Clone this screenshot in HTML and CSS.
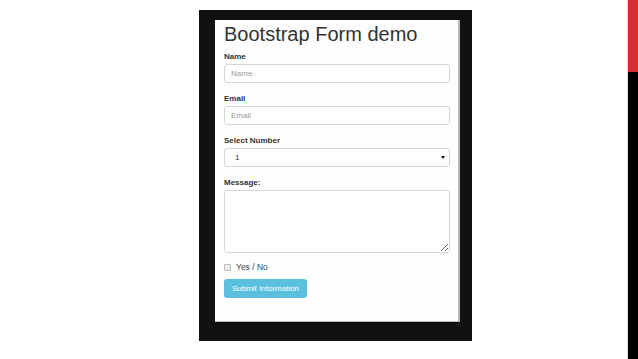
FILE: index.html
```html
<!DOCTYPE html>
<html>

<head>
    <title>Bootstrap Form demo</title>
    <link rel="stylesheet" href="styles.css">
</head>

<body>
    <div class="slide">
        <div class="screen">
            <div class="panel">
                <h1>Bootstrap Form demo</h1>
                <form onsubmit="event.preventDefault();" autocomplete="off">
                    <div class="form-group">
                        <label for="name">Name</label>
                        <input type="text" id="name" placeholder="Name">
                    </div>
                    <div class="form-group">
                        <label for="email">Email</label>
                        <input type="text" id="email" placeholder="Email">
                    </div>
                    <div class="form-group">
                        <label for="number">Select Number</label>
                        <div class="select-wrap">
                            <select id="number">
                                <option>1</option>
                                <option>2</option>
                                <option>3</option>
                            </select>
                        </div>
                    </div>
                    <div class="form-group">
                        <label for="message">Message:</label>
                        <textarea id="message"></textarea>
                    </div>
                    <div class="checkbox">
                        <input type="checkbox" id="yesno">
                        <label for="yesno">Yes / No</label>
                    </div>
                    <input type="submit" class="btn-info" value="Submit Information">
                </form>
            </div>
        </div>
    </div>
    <div class="side-bar">
        <div class="side-red"></div>
        <div class="side-black"></div>
    </div>
</body>

</html>
```

FILE: styles.css
```css
html, body {
    margin: 0;
    height: 100%;
    background-color: #fff;
}

body {
    display: flex;
    font-family: "Liberation Sans", Arial, sans-serif;
    color: #333;
}

.slide {
    flex: 1;
    padding: 10px 0 0 199px;
}

.screen {
    width: 273px;
    height: 331px;
    background-color: #111;
    padding: 10px 0 0 16px;
    box-sizing: border-box;
}

.panel {
    width: 245px;
    height: 302px;
    box-sizing: border-box;
    background-color: #fefefe;
    border-right: 2px solid #b8b8b8;
    border-bottom: 1px solid #b8b8b8;
    padding: 2px 8px 0 9px;
}

h1 {
    margin: 0;
    font-size: 20px;
    line-height: 24px;
    font-weight: normal;
    color: #333;
}

form {
    padding-top: 5px;
}

.form-group {
    margin-bottom: 10px;
}

.form-group label {
    display: block;
    font-size: 8px;
    line-height: 12px;
    font-weight: bold;
    margin-bottom: 1px;
}

input[type=text], select, textarea {
    display: block;
    width: 100%;
    height: 19px;
    box-sizing: border-box;
    border: 1px solid #d6d6d6;
    border-radius: 3px;
    background-color: #fff;
    font-family: "Liberation Sans", Arial, sans-serif;
    font-size: 8px;
    color: #333;
    padding: 0 6px;
    margin: 0;
    outline: none;
}

input::placeholder {
    color: #999;
}

.select-wrap {
    position: relative;
}

select {
    appearance: none;
    padding-left: 10px;
}

.select-wrap::after {
    content: "";
    position: absolute;
    right: 5px;
    top: 8px;
    border-left: 2px solid transparent;
    border-right: 2px solid transparent;
    border-top: 3px solid #111;
}

textarea {
    height: 63px;
    resize: vertical;
    padding: 4px 6px;
}

.checkbox {
    display: flex;
    align-items: center;
    gap: 5px;
    height: 12px;
    margin-top: -2px;
    font-size: 8.5px;
    color: #444;
}

.checkbox input {
    appearance: none;
    width: 7px;
    height: 7px;
    margin: 0;
    border: 1px solid #bbb;
    border-radius: 1px;
    background-color: #eee;
}

input[type=submit].btn-info {
    display: block;
    margin-top: 6px;
    height: 19px;
    width: 83px;
    padding: 0;
    border: none;
    border-radius: 3px;
    background-color: #5bc0de;
    color: #fff;
    font-family: "Liberation Sans", Arial, sans-serif;
    font-size: 8px;
    cursor: pointer;
}

.side-bar {
    width: 10px;
    display: flex;
    flex-direction: column;
    border-left: 1px solid #ddd;
}

.side-red {
    height: 72px;
    background-color: #d42f36;
}

.side-black {
    flex: 1;
    background-color: #000;
}
```
